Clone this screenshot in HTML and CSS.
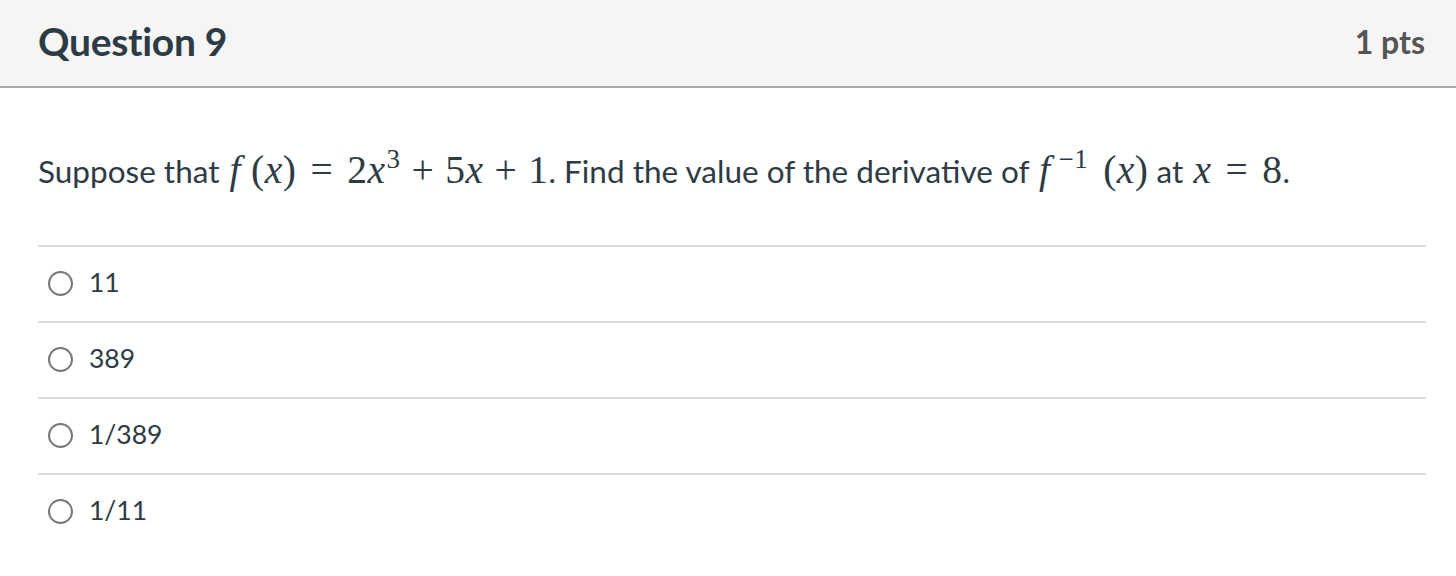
FILE: index.html
```html
<!DOCTYPE html>
<html>
<head>
<meta charset="utf-8">
<link rel="stylesheet" href="styles.css">
</head>
<body>
<div class="question">
  <div class="header">
    <h2 class="title">Question 9</h2>
    <div class="pts">1 pts</div>
  </div>
  <div class="body">
    <p class="text">Suppose that <span class="math"><i>f</i><span class="thin"></span>(<i>x</i>)<span class="rel">=</span>2<i>x</i><sup>3</sup><span class="bin">+</span>5<i>x</i><span class="bin">+</span>1</span>. Find the value of the derivative of <span class="math wide"><i>f</i><sup class="inv">&#8722;1</sup><span class="thin"></span>(<i>x</i>)</span> at <span class="math"><i>x</i><span class="rel">=</span>8</span>.</p>
    <div class="answers">
      <label class="answer"><span class="radio"></span><span class="label">11</span></label>
      <label class="answer"><span class="radio"></span><span class="label">389</span></label>
      <label class="answer"><span class="radio"></span><span class="label">1/389</span></label>
      <label class="answer"><span class="radio"></span><span class="label">1/11</span></label>
    </div>
  </div>
</div>
</body>
</html>
```
FILE: styles.css
```css
html, body {
  margin: 0;
  padding: 0;
  background: #fff;
}
body {
  font-family: Lato, "Open Sans", sans-serif;
  color: #2d3b45;
}
.header {
  display: flex;
  align-items: center;
  justify-content: space-between;
  padding: 0 31px 4px 38px;
  background: #f5f5f5;
  border-bottom: 2px solid #aaa;
  box-sizing: border-box;
  height: 88px;
}
.title {
  margin: 0;
  font-size: 39px;
  font-weight: 700;
  color: #2d3b45;
  letter-spacing: -0.3px;
}
.pts {
  font-size: 32px;
  font-weight: 700;
  color: #555;
}
.body {
  padding: 0 30px 0 38px;
}
.text {
  margin: 0;
  padding-top: 62px;
  height: 95px;
  font-size: 31.5px;
  line-height: 40px;
}
.math {
  font-family: "Liberation Serif", "DejaVu Serif", serif;
  font-size: 39.5px;
  letter-spacing: 0.5px;
  margin-left: 2px;
}
.math i {
  font-style: italic;
}
.math sup {
  font-size: 27px;
  vertical-align: 15px;
  line-height: 0;
  font-style: normal;
  margin-left: 1px;
}
.math sup.inv {
  margin-left: 8px;
}
.thin {
  display: inline-block;
  width: 10px;
}
.wide .thin {
  width: 15px;
}
.rel {
  padding: 0 14px;
}
.bin {
  padding: 0 11px;
}
.answers {
  display: flex;
  flex-direction: column;
}
.answer {
  display: flex;
  align-items: center;
  height: 76px;
  border-top: 2px solid #ddd;
  box-sizing: border-box;
  padding-left: 10px;
  padding-bottom: 2px;
}
.radio {
  width: 21px;
  height: 21px;
  border: 2px solid #777;
  border-radius: 50%;
  flex: none;
  margin-right: 16px;
}
.label {
  font-size: 26.5px;
  color: #2d3b45;
  padding-bottom: 3px;
}
```
